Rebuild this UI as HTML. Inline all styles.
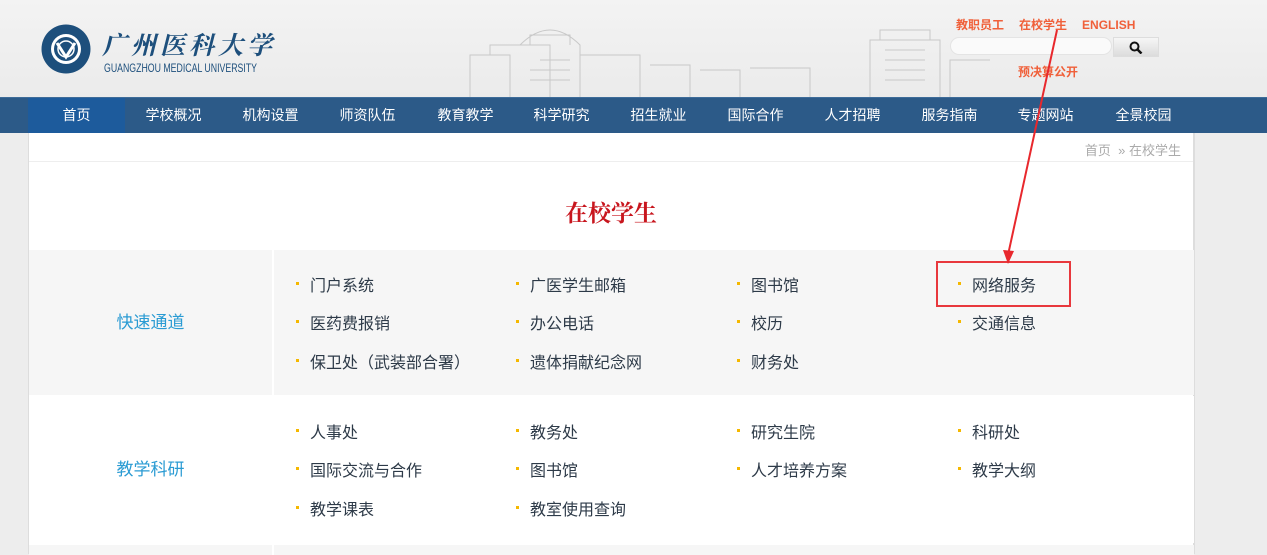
<!DOCTYPE html>
<html><head><meta charset="utf-8"><style>
*{margin:0;padding:0;box-sizing:border-box}
body{width:1267px;height:554px;overflow:hidden;background:#ededed;font-family:"Liberation Sans","Noto Sans CJK SC",sans-serif;position:relative}
.hd{position:absolute;left:0;top:0;width:1267px;height:97px;background:linear-gradient(#f3f3f3,#ebebeb)}
.nav{position:absolute;left:0;top:97px;width:1267px;height:36px;background:#2c5a88;border-top:1px solid #3e6c99}
.nav a{position:absolute;top:0;width:97px;height:36px;line-height:35px;text-align:center;color:#fff;font-size:14px;text-decoration:none}
.nav a.on{background:#1d5b9c}
.box{position:absolute;left:28px;top:133px;width:1167px;height:421px;background:#fff;border-left:1px solid #ddd;border-right:2px solid #ddd}
.bc{position:absolute;right:12px;top:7px;font-size:13px;color:#aaa}
.line{position:absolute;left:0;top:28px;width:100%;height:1px;background:#eee}
.title{position:absolute;left:0;width:100%;top:62px;text-align:center;font-family:"Liberation Serif","Noto Serif CJK SC",serif;font-weight:bold;color:#c8161e;font-size:23px}
.row{position:absolute;left:0;width:1165px}
.lab{position:absolute;left:0;top:0;width:243px;height:100%;color:#2a9bd3;font-size:17px;text-align:center}
.sep{position:absolute;left:243px;top:0;width:2px;height:100%;background:#fff}
.it{position:absolute;font-size:16px;color:#2d3a48;white-space:nowrap}
.it:before{content:"";position:absolute;left:-14px;top:10px;width:3px;height:3px;background:#f5b800}
</style></head><body>
<div class="hd">
<svg style="position:absolute;left:430px;top:10px" width="560" height="87" viewBox="0 0 560 87">
<g fill="none" stroke="#c8c8c8" stroke-width="1">
<path d="M40 87V45h40V87M60 45V35h60v52M90 35q30-30 60 0v52M100 35V25h40v10M110 50h30M100 60h40M100 70h40"/>
<path d="M150 45h60v42M220 55h40v32M270 60h40v27M320 58h60v29"/>
<path d="M440 87V30h70v57M450 30V20h50v10M455 40h40M455 50h40M455 60h40M455 70h40M520 87V50h40"/>
</g></svg>
<svg style="position:absolute;left:41px;top:24px" width="50" height="50" viewBox="0 0 50 50">
<circle cx="25" cy="25" r="24.5" fill="#1d4f7c"/><circle cx="25" cy="25" r="15" fill="#fff"/><circle cx="25" cy="25" r="12" fill="#1d4f7c"/>
<path d="M16 19l9 14 9-14" stroke="#fff" stroke-width="3" fill="none"/><circle cx="25" cy="25" r="8" stroke="#fff" stroke-width="1.5" fill="none"/></svg>
<div style="position:absolute;left:102px;top:26px;font-family:'Liberation Serif','Noto Serif CJK SC',serif;font-style:italic;font-size:25px;color:#1d4f7c;letter-spacing:4px;font-weight:bold;white-space:nowrap">广州医科大学</div>
<div style="position:absolute;left:104px;top:61px;font-size:12px;color:#1d4f7c;transform:scaleX(.73);transform-origin:left;white-space:nowrap">GUANGZHOU MEDICAL UNIVERSITY</div>
<div style="position:absolute;left:956px;top:16px;font-size:12px;color:#f0603a;font-weight:bold;white-space:nowrap;word-spacing:0">教职员工<span style="display:inline-block;width:15px"></span>在校学生<span style="display:inline-block;width:15px"></span>ENGLISH</div>
<div style="position:absolute;left:950px;top:37px;width:162px;height:18px;background:#fafafa;border-radius:9px;border:1px solid #e4e4e4"></div>
<div style="position:absolute;left:1113px;top:37px;width:46px;height:20px;background:linear-gradient(#f6f6f6,#dcdcdc);border:1px solid #ddd">
<svg style="position:absolute;left:15px;top:3px" width="14" height="13"><circle cx="5.5" cy="5.5" r="4" stroke="#111" stroke-width="2" fill="none"/><path d="M8.5 8.5l4 4" stroke="#111" stroke-width="2.5"/></svg></div>
<div style="position:absolute;left:1018px;top:63px;font-size:12px;color:#f0603a;font-weight:bold">预决算公开</div>
</div>
<div class="nav">
<a class="on" style="left:28px">首页</a><a style="left:125px">学校概况</a><a style="left:222px">机构设置</a><a style="left:319px">师资队伍</a><a style="left:417px">教育教学</a><a style="left:513px">科学研究</a><a style="left:610px">招生就业</a><a style="left:707px">国际合作</a><a style="left:804px">人才招聘</a><a style="left:901px">服务指南</a><a style="left:997px">专题网站</a><a style="left:1095px">全景校园</a>
</div>
<div class="box">
<div class="bc">首页 &nbsp;» 在校学生</div><div class="line"></div>
<div class="title">在校学生</div>
<div class="row" style="top:117px;height:145px;background:#f6f6f6">
<div class="lab" style="line-height:145px">快速通道</div><div class="sep"></div>
</div>
<div class="row" style="top:263px;height:147px;background:#fff">
<div class="lab" style="line-height:147px">教学科研</div>
</div>
<div class="row" style="top:412px;height:10px;background:#f6f6f6"><div class="sep"></div></div>
</div>
<div class="it" style="left:310px;top:272px">门户系统</div>
<div class="it" style="left:530px;top:272px">广医学生邮箱</div>
<div class="it" style="left:751px;top:272px">图书馆</div>
<div class="it" style="left:972px;top:272px">网络服务</div>
<div class="it" style="left:310px;top:310px">医药费报销</div>
<div class="it" style="left:530px;top:310px">办公电话</div>
<div class="it" style="left:751px;top:310px">校历</div>
<div class="it" style="left:972px;top:310px">交通信息</div>
<div class="it" style="left:310px;top:349px">保卫处（武装部合署）</div>
<div class="it" style="left:530px;top:349px">遗体捐献纪念网</div>
<div class="it" style="left:751px;top:349px">财务处</div>
<div class="it" style="left:310px;top:419px">人事处</div>
<div class="it" style="left:530px;top:419px">教务处</div>
<div class="it" style="left:751px;top:419px">研究生院</div>
<div class="it" style="left:972px;top:419px">科研处</div>
<div class="it" style="left:310px;top:457px">国际交流与合作</div>
<div class="it" style="left:530px;top:457px">图书馆</div>
<div class="it" style="left:751px;top:457px">人才培养方案</div>
<div class="it" style="left:972px;top:457px">教学大纲</div>
<div class="it" style="left:310px;top:496px">教学课表</div>
<div class="it" style="left:530px;top:496px">教室使用查询</div>
<div style="position:absolute;left:936px;top:261px;width:135px;height:46px;border:2px solid #e8383d"></div>
<svg style="position:absolute;left:0;top:0" width="1267" height="554"><path d="M1057 30L1008 255" stroke="#e8282d" stroke-width="2"/><path d="M1003 250l5 14 6-13z" fill="#e8282d"/></svg>
</body></html>
